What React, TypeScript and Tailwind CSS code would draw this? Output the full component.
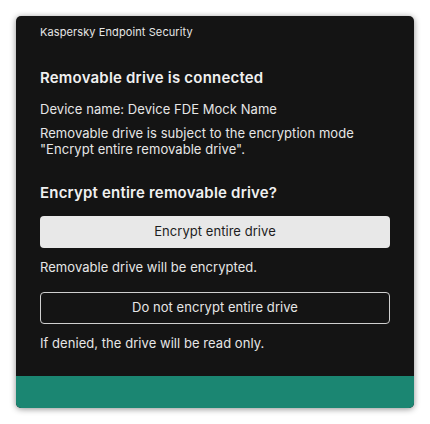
import React from "react";

export default function App() {
  return (
    <div
      className="w-[430px] h-[424px] bg-white pt-[16px] pl-[16px]"
      style={{ fontFamily: "Inter, 'Noto Sans', sans-serif" }}
    >
      <div className="w-[398px] h-[392px] bg-[#141414] rounded-[5px] shadow-[0_1px_6px_rgba(0,0,0,0.45)] flex flex-col overflow-hidden">
        <div className="flex-1 px-6 pt-2 flex flex-col text-[#e6e6e6] tracking-[0.05px]">
          <div className="text-[11px] leading-4 h-4 tracking-[0.1px]">Kaspersky Endpoint Security</div>
          <div className="mt-[28px] text-[15px] leading-5 font-semibold text-[#f0f0f0] tracking-[0.2px]">
            Removable drive is connected
          </div>
          <div className="mt-[13px] text-[13px] leading-4">Device name: Device FDE Mock Name</div>
          <div className="mt-2 text-[13px] leading-4">
            Removable drive is subject to the encryption mode
            <br />
            "Encrypt entire removable drive".
          </div>
          <div className="mt-[26px] text-[15px] leading-5 font-semibold text-[#f0f0f0] tracking-[0.2px]">
            Encrypt entire removable drive?
          </div>
          <button className="mt-[13px] h-8 w-full rounded-[4px] bg-[#e8e8e8] text-[#1d1d1d] text-[13px] tracking-[0.05px]">
            Encrypt entire drive
          </button>
          <div className="mt-[11px] text-[13px] leading-4">Removable drive will be encrypted.</div>
          <button className="mt-[17px] h-8 w-full rounded-[4px] border border-[#cfcfcf] text-[#e6e6e6] text-[13px] tracking-[0.05px]">
            Do not encrypt entire drive
          </button>
          <div className="mt-[11px] text-[13px] leading-4">If denied, the drive will be read only.</div>
        </div>
        <div className="h-8 bg-[#1b8672]" />
      </div>
    </div>
  );
}
